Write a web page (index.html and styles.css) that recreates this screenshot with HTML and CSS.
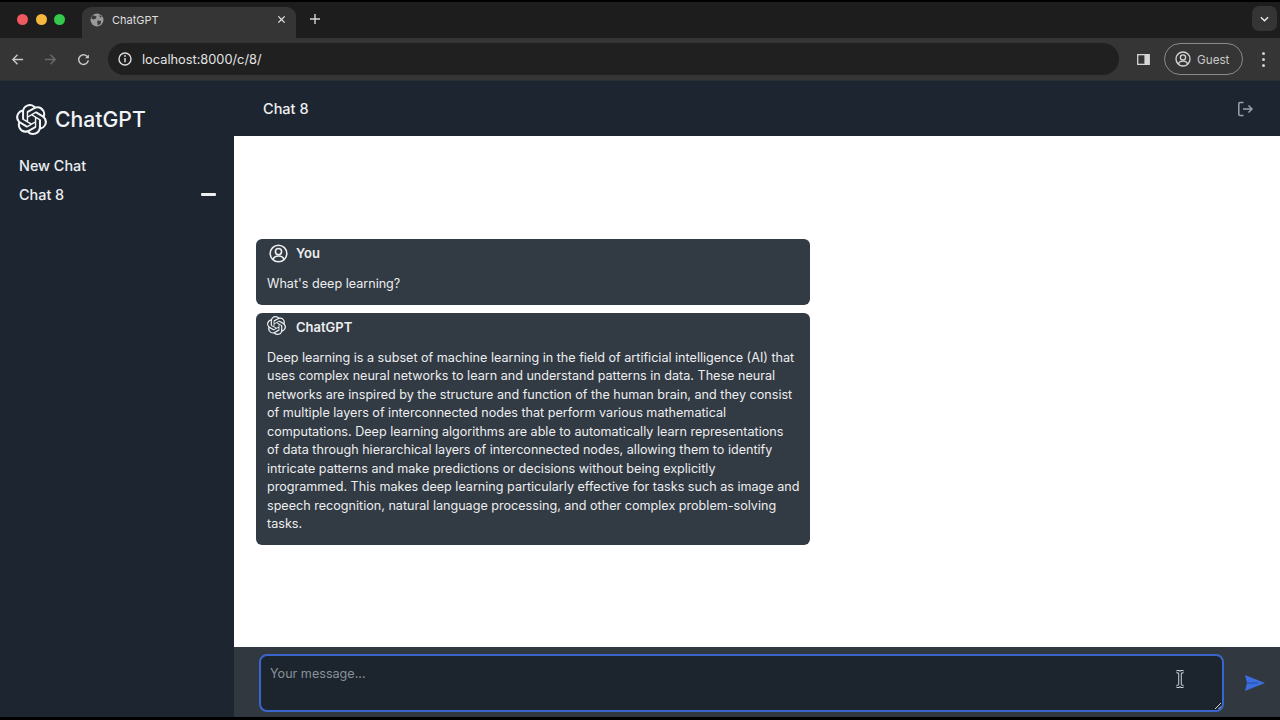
FILE: index.html
```html
<!DOCTYPE html>
<html lang="en">
<head>
<meta charset="utf-8">
<title>ChatGPT</title>
<link rel="stylesheet" href="styles.css">
</head>
<body>
<svg class="defs" width="0" height="0" aria-hidden="true">
  <symbol id="openai" viewBox="0 0 24 24"><path fill="currentColor" d="M22.282 9.821a5.985 5.985 0 0 0-.516-4.91 6.046 6.046 0 0 0-6.51-2.9A6.065 6.065 0 0 0 4.981 4.18a5.985 5.985 0 0 0-3.998 2.9 6.046 6.046 0 0 0 .743 7.097 5.98 5.98 0 0 0 .51 4.911 6.051 6.051 0 0 0 6.515 2.9A5.985 5.985 0 0 0 13.26 24a6.056 6.056 0 0 0 5.772-4.206 5.99 5.99 0 0 0 3.997-2.9 6.056 6.056 0 0 0-.747-7.073zM13.26 22.43a4.476 4.476 0 0 1-2.876-1.04l.141-.081 4.779-2.758a.795.795 0 0 0 .392-.681v-6.737l2.02 1.168a.071.071 0 0 1 .038.052v5.583a4.504 4.504 0 0 1-4.494 4.494zM3.6 18.304a4.47 4.47 0 0 1-.535-3.014l.142.085 4.783 2.759a.771.771 0 0 0 .78 0l5.843-3.369v2.332a.08.08 0 0 1-.033.062L9.74 19.95a4.5 4.5 0 0 1-6.14-1.646zM2.34 7.896a4.485 4.485 0 0 1 2.366-1.973V11.6a.766.766 0 0 0 .388.676l5.815 3.355-2.02 1.168a.076.076 0 0 1-.071 0l-4.83-2.786A4.504 4.504 0 0 1 2.34 7.872zm16.597 3.855l-5.833-3.387L15.119 7.2a.076.076 0 0 1 .071 0l4.83 2.791a4.494 4.494 0 0 1-.676 8.105v-5.678a.79.79 0 0 0-.407-.667zm2.01-3.023l-.141-.085-4.774-2.782a.776.776 0 0 0-.785 0L9.409 9.23V6.897a.066.066 0 0 1 .028-.061l4.83-2.787a4.5 4.5 0 0 1 6.68 4.66zm-12.64 4.135l-2.02-1.164a.08.08 0 0 1-.038-.057V6.075a4.5 4.5 0 0 1 7.375-3.453l-.142.08L8.704 5.46a.795.795 0 0 0-.393.681zm1.097-2.365l2.602-1.5 2.607 1.5v2.999l-2.597 1.5-2.607-1.5z"/></symbol>
  <symbol id="user" viewBox="0 0 24 24"><g fill="none" stroke="currentColor" stroke-width="2"><circle cx="12" cy="12" r="10.5"/><circle cx="12" cy="9.600" r="3.900"/><path d="M5 19.600c1-3 3.600-4.400 7-4.400s6 1.400 7 4.400"/></g></symbol>
</svg>

<header class="tabstrip">
  <div class="lights"><span class="light red"></span><span class="light amber"></span><span class="light green"></span></div>
  <div class="tab">
    <svg class="globe" viewBox="0 0 14 14"><circle cx="7" cy="7" r="6.500" fill="#9a9a9a"/><path d="M3 2.200 6.600 3.400 6 5.600 3.400 6.400 1 5.200zM7.600 7.400l3.600.6-.8 3-2.400 1.600-.8-3zM9 1.400l3 2.600-2 .6z" fill="#3a3a3a"/></svg>
    <span class="tab-title">ChatGPT</span>
    <svg class="tab-x" viewBox="0 0 10 10"><path d="M1.500 1.500l7 7M8.500 1.500l-7 7" stroke="#e6e6e6" stroke-width="1.400" fill="none"/></svg>
  </div>
  <svg class="plus" viewBox="0 0 12 12"><path d="M6 1v10M1 6h10" stroke="#d8d8d8" stroke-width="1.400" fill="none"/></svg>
  <div class="tab-menu"><svg viewBox="0 0 10 6" class="chev"><path d="M1 1l4 4 4-4" stroke="#eee" stroke-width="1.500" fill="none"/></svg></div>
</header>

<nav class="toolbar">
  <svg class="nav-ic" viewBox="0 0 14 14"><path d="M13 7H2M7 2 2 7l5 5" stroke="#c9c9c9" stroke-width="1.500" fill="none"/></svg>
  <svg class="nav-ic" viewBox="0 0 14 14"><path d="M1 7h11M7 2l5 5-5 5" stroke="#6a6a6a" stroke-width="1.500" fill="none"/></svg>
  <svg class="nav-ic" viewBox="0 0 14 14"><path d="M11.800 5A5.200 5.200 0 1 0 12.200 8" stroke="#c9c9c9" stroke-width="1.500" fill="none"/><path d="M12.800 1.500v4.200H8.600z" fill="#c9c9c9"/></svg>
  <div class="omnibox">
    <svg class="info" viewBox="0 0 14 14"><circle cx="7" cy="7" r="6" stroke="#dcdcdc" stroke-width="1.400" fill="none"/><path d="M7 6v4.200" stroke="#dcdcdc" stroke-width="1.500"/><circle cx="7" cy="4" r=".9" fill="#dcdcdc"/></svg>
    <span class="url">localhost:8000/c/8/</span>
  </div>
  <svg class="side-ic" viewBox="0 0 14 12"><rect x=".7" y=".7" width="12.600" height="10.600" fill="none" stroke="#d6d6d6" stroke-width="1.400"/><rect x="8" y="1" width="5" height="10" fill="#d6d6d6"/></svg>
  <div class="profile">
    <svg class="profile-ic"><use href="#user"/></svg>
    <span class="profile-name">Guest</span>
  </div>
  <div class="kebab"><i></i><i></i><i></i></div>
</nav>

<div class="app">
  <aside class="sidebar">
    <div class="brand"><svg class="brand-logo"><use href="#openai"/></svg><span>ChatGPT</span></div>
    <div class="side-item">New Chat</div>
    <div class="side-item"><span>Chat 8</span><span class="minus"></span></div>
  </aside>
  <div class="content">
    <div class="topbar">
      <span class="chat-title">Chat 8</span>
      <svg class="logout" viewBox="0 0 16 16"><path d="M6.500 1.500H3a1.200 1.200 0 0 0-1.200 1.200v10.600A1.200 1.200 0 0 0 3 14.500h3.500M6 8h8.800M11.500 4.500 15 8l-3.500 3.500" fill="none" stroke="#9aa1a9" stroke-width="1.500"/></svg>
    </div>
    <main class="messages">
      <article class="bubble">
        <div class="who"><svg class="who-ic user-ic"><use href="#user"/></svg><strong>You</strong></div>
        <p>What's deep learning?</p>
      </article>
      <article class="bubble">
        <div class="who"><svg class="who-ic gpt-ic"><use href="#openai"/></svg><strong>ChatGPT</strong></div>
        <p>Deep learning is a subset of machine learning in the field of artificial intelligence (AI) that uses complex neural networks to learn and understand patterns in data. These neural networks are inspired by the structure and function of the human brain, and they consist of multiple layers of interconnected nodes that perform various mathematical computations. Deep learning algorithms are able to automatically learn representations<br>of data through hierarchical layers of interconnected nodes, allowing them to identify intricate patterns and make predictions or decisions without being explicitly<br>programmed. This makes deep learning particularly effective for tasks such as image and speech recognition, natural language processing, and other complex problem-solving tasks.</p>
      </article>
    </main>
    <footer class="composer">
      <div class="input">
        <span class="placeholder">Your message...</span>
        <svg class="caret" viewBox="0 0 10 18"><path d="M1.500 1.500c2.500 0 3.500.5 3.500 2v11c0 1.500-1 2-3.500 2M8.500 1.500c-2.500 0-3.500.5-3.500 2v11c0 1.500 1 2 3.500 2" stroke="#dfe3e8" stroke-width="3.400" fill="none"/><path d="M1.500 1.500c2.500 0 3.500.5 3.500 2v11c0 1.500-1 2-3.500 2M8.500 1.500c-2.500 0-3.500.5-3.500 2v11c0 1.500 1 2 3.500 2" stroke="#1c252e" stroke-width="1.600" fill="none"/></svg>
        <svg class="grip" viewBox="0 0 8 8"><path d="M1 7l6-6M4.500 7 7 4.500" stroke="#cfd3d8" stroke-width="1"/></svg>
      </div>
      <svg class="send" viewBox="0 0 20 16"><path d="M0 0 20 8 0 16 2 8z" fill="#3b6fe0"/><path d="M2 8h11" stroke="#2a50a8" stroke-width="1.200"/></svg>
    </footer>
  </div>
</div>
<div class="bottom"></div>
</body>
</html>
```
FILE: styles.css
```css
* { box-sizing: border-box; }
html, body { margin: 0; height: 100%; }
body {
  width: 1280px; height: 720px; overflow: hidden;
  display: flex; flex-direction: column;
  background: #000; color: #e9ebee;
  font-family: Inter, "Liberation Sans", sans-serif;
  border-top: 2px solid #000;
}
.defs { position: absolute; }

.tabstrip {
  height: 36px; flex: none; display: flex; align-items: center;
  background: #1d1d1d;
}
.lights { display: flex; gap: 7.500px; padding-left: 17px; width: 82px; margin-top: -1px; }
.light { width: 11px; height: 11px; border-radius: 50%; }
.red { background: #ee5a5f; } .amber { background: #f5b83d; } .green { background: #35c94b; }
.tab {
  width: 214px; height: 31px; margin-top: 5px; padding: 0 10px 6px 8px;
  display: flex; align-items: center; gap: 8px;
  background: #353535; border-radius: 9px 9px 0 0;
  font-size: 11px; color: #dedede;
}
.globe { width: 14px; height: 14px; }
.tab-title { flex: 1; }
.tab-x { width: 9px; height: 9px; }
.plus { width: 12px; height: 12px; margin: -2px 0 0 13px; }
.tab-menu {
  width: 25px; height: 25px; margin: -3px 3px 0 auto;
  background: #353535; border-radius: 7px;
  display: flex; align-items: center; justify-content: center;
}
.chev { width: 9px; height: 6px; }

.toolbar {
  height: 43px; flex: none; display: flex; align-items: center;
  background: #353535; padding-left: 11px;
  border-bottom: 1px solid #2a2d31;
}
.nav-ic { width: 13px; height: 13px; margin-right: 20px; }
.nav-ic:nth-of-type(3) { margin-right: 18px; }
.omnibox {
  width: 1011px; height: 32px; border-radius: 16px; background: #202020;
  display: flex; align-items: center; padding-left: 10px; gap: 10px;
}
.info { width: 14px; height: 14px; }
.url { font-size: 12.800px; color: #e4e4e4; }
.side-ic { width: 13px; height: 11px; margin-left: 18px; }
.profile {
  width: 79px; height: 32px; margin-left: 14px; border: 1px solid #8a8a8a; border-radius: 16px;
  display: flex; align-items: center; gap: 6px; padding-left: 10px;
  font-size: 11.700px; color: #c9c9c9;
}
.profile-name { margin-top: 1px; }
.profile-ic { width: 16px; height: 16px; color: #d4d4d4; }
.kebab { display: flex; flex-direction: column; gap: 3px; margin-left: 19px; }
.kebab i { display: block; width: 3px; height: 3px; border-radius: 50%; background: #d0d0d0; }

.app { flex: 1; min-height: 0; display: flex; background: #1d2630; }
.sidebar { width: 234px; flex: none; padding: 22px 18px 0 16px; }
.brand { display: flex; align-items: center; gap: 8px; font-size: 21.200px; font-weight: 500; color: #f3f4f6; height: 32px; margin-bottom: 15.500px; }
.brand-logo { width: 31px; height: 31px; color: #f3f4f6; }
.side-item {
  height: 29.500px; padding-left: 3px; display: flex; align-items: center; justify-content: space-between;
  font-size: 14.400px; font-weight: 500; color: #eceef0;
}
.minus { width: 15px; height: 3px; margin-top: -1px; background: #eceef0; border-radius: 1px; }

.content { flex: 1; min-width: 0; display: flex; flex-direction: column; }
.topbar {
  height: 55px; flex: none; display: flex; align-items: center; justify-content: space-between;
  padding: 0 27px 0 29px;
}
.chat-title { font-size: 14.500px; font-weight: 500; color: #f0f1f3; }
.logout { width: 16px; height: 16px; }
.messages {
  flex: 1; min-height: 0; background: #fff; padding: 1px 0 0 22px;
  display: flex; flex-direction: column; justify-content: center; gap: 8px;
}
.bubble {
  width: 554px; padding: 4px 9px 0 11px; background: #323a43; border-radius: 6px; color: #eceef0;
}
.who { display: flex; align-items: center; height: 20px; font-size: 13px; }
.who strong { font-weight: 600; }
.who-ic { flex: none; }
.user-ic { width: 19px; height: 19px; margin: 0 8px 0 2px; }
.gpt-ic { width: 19px; height: 19px; margin: -3px 10px 0 0; }
.bubble p { margin: 12px 0 0; padding-bottom: 11.500px; font-size: 12.600px; line-height: 18.450px; }

.composer {
  height: 70px; flex: none; display: flex; align-items: center; background: #32383f; padding: 0 15px 0 25px;
}
.input {
  width: 966px; height: 58px; position: relative; margin-top: 2px;
  background: #1c252e; border: 2px solid #3a66cc; border-radius: 8px;
  padding: 10px 9px; font-size: 12.600px;
}
.placeholder { color: #8a9098; }
.caret { position: absolute; right: 37px; top: 14px; width: 10px; height: 18px; }
.grip { position: absolute; right: 0; bottom: 0; width: 8px; height: 8px; }
.send { width: 20px; height: 16px; margin: 1px 0 0 21px; }
.bottom { height: 3px; flex: none; background: #000; }
```
